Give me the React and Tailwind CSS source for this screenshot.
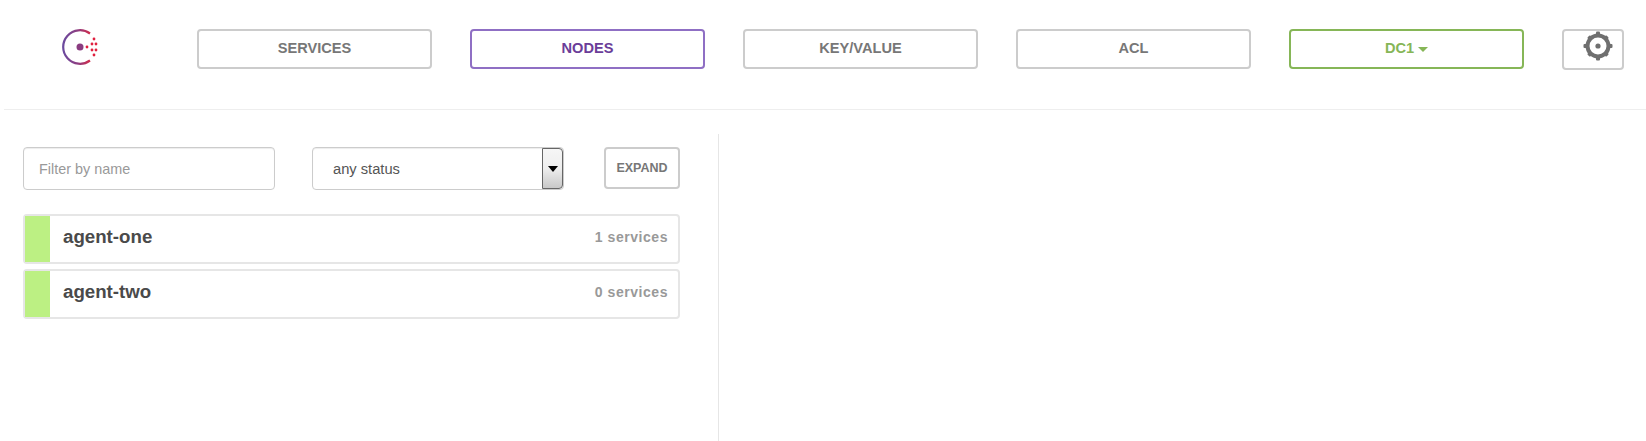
const navItems = [
  { label: 'SERVICES', tone: 'border-[#cccccc] text-[#777]' },
  { label: 'NODES', tone: 'border-[#8f6fc4] text-[#6b3d99]' },
  { label: 'KEY/VALUE', tone: 'border-[#cccccc] text-[#777]' },
  { label: 'ACL', tone: 'border-[#cccccc] text-[#777]' },
];

const nodes = [
  { name: 'agent-one', services: '1 services' },
  { name: 'agent-two', services: '0 services' },
];

function Logo() {
  return (
    <svg width="38" height="38" viewBox="0 0 38 38" className="block">
      <defs>
        <linearGradient id="ring" x1="0" y1="0" x2="1" y2="0">
          <stop offset="0" stopColor="#6b4a9e" />
          <stop offset="0.55" stopColor="#8e3d80" />
          <stop offset="1" stopColor="#d02c4c" />
        </linearGradient>
      </defs>
      <path d="M30 5.5 A 16.8 16.8 0 1 0 30 32.5" fill="none" stroke="url(#ring)" strokeWidth="2.2" />
      <circle cx="20" cy="19" r="3.5" fill="#8a3c80" />
      <g fill="#e0203f">
        <circle cx="27" cy="19" r="1.4" />
        <circle cx="34" cy="11" r="1.4" />
        <circle cx="32" cy="16" r="1.4" />
        <circle cx="36" cy="16" r="1.4" />
        <circle cx="32" cy="22" r="1.4" />
        <circle cx="36" cy="22" r="1.4" />
        <circle cx="34" cy="27" r="1.4" />
      </g>
    </svg>
  );
}

function Gear() {
  return (
    <svg width="30" height="30" viewBox="0 0 30 30" className="block">
      <g fill="#6f6f6f">
        <rect x="13" y="0.5" width="4" height="29" rx="1" />
        <rect x="0.5" y="13" width="29" height="4" rx="1" />
        <rect x="13" y="1.5" width="4" height="27" rx="1" transform="rotate(45 15 15)" />
        <rect x="13" y="1.5" width="4" height="27" rx="1" transform="rotate(-45 15 15)" />
      </g>
      <circle cx="15" cy="15" r="10.5" fill="#fff" stroke="#6f6f6f" strokeWidth="4" />
      <circle cx="15" cy="15" r="2.6" fill="#6f6f6f" />
    </svg>
  );
}

function App() {
  return (
    <div className="h-[441px] overflow-hidden bg-white font-['Liberation_Sans',Arial,sans-serif]">
      <header className="ml-1 flex h-[110px] border-b border-[#eeeeee]">
        <div className="ml-[56px] mt-[28px] w-[137px]">
          <Logo />
        </div>
        <nav className="mt-[29px] flex items-start gap-[38px]">
          {navItems.map((item) => (
            <a
              key={item.label}
              className={
                'flex h-10 w-[235px] items-center justify-center rounded border-2 bg-white text-[14.6px] font-bold ' +
                item.tone
              }
            >
              {item.label}
            </a>
          ))}
          <a className="flex h-10 w-[235px] items-center justify-center gap-1 rounded border-2 border-[#86b657] bg-white text-[14.6px] font-bold text-[#86b657]">
            DC1
            <span className="mt-px h-0 w-0 border-x-[5px] border-t-[5px] border-x-transparent border-t-[#86b657]" />
          </a>
          <a className="flex h-[41px] w-[62px] items-start justify-end rounded border-2 border-[#cccccc] bg-white pr-[9px]">
            <Gear />
          </a>
        </nav>
      </header>

      <main className="flex">
        <section className="ml-[23px] w-[657px] pt-[37px]">
          <div className="flex items-start">
            <input
              placeholder="Filter by name"
              className="h-[43px] w-[252px] rounded border border-[#cccccc] px-[15px] text-[14.4px] text-[#555] shadow-[inset_0_1px_1px_rgba(0,0,0,0.075)] outline-none placeholder:text-[#999]"
            />
            <div className="ml-[37px] flex h-[43px] w-[252px] items-center justify-between rounded border border-[#cccccc] pl-5 text-[14.7px] text-[#555] shadow-[inset_0_1px_1px_rgba(0,0,0,0.075)]">
              <span className="pt-px">any status</span>
              <span className="flex h-[41px] w-[21px] items-center justify-center rounded-r-sm border border-[#666] bg-gradient-to-b from-[#f6f6f6] via-[#eeeeee] to-[#c8c8c8]">
                <span className="h-0 w-0 border-x-[5px] border-t-[6px] border-x-transparent border-t-black" />
              </span>
            </div>
            <button
              type="button"
              className="ml-[40px] h-[42px] w-[76px] rounded border-2 border-[#cccccc] bg-white text-[12.5px] font-bold text-[#777]"
            >
              EXPAND
            </button>
          </div>

          <div className="mt-6 flex flex-col gap-[5px]">
            {nodes.map((node) => (
              <div
                key={node.name}
                className="flex h-[50px] items-center rounded border-2 border-[#e6e6e6] bg-white pr-[10px]"
              >
                <span className="h-full w-[25px] bg-[#bcf083]" />
                <h4 className="mb-1 ml-[13px] text-[18.7px] font-bold text-[#4a4a4a]">{node.name}</h4>
                <span className="mb-1 ml-auto text-sm font-bold tracking-[0.55px] text-[#999]">{node.services}</span>
              </div>
            ))}
          </div>
        </section>
        <div className="ml-[38px] mt-6 h-[308px] border-l border-[#e6e6e6]" />
      </main>
    </div>
  );
}

export default App;
